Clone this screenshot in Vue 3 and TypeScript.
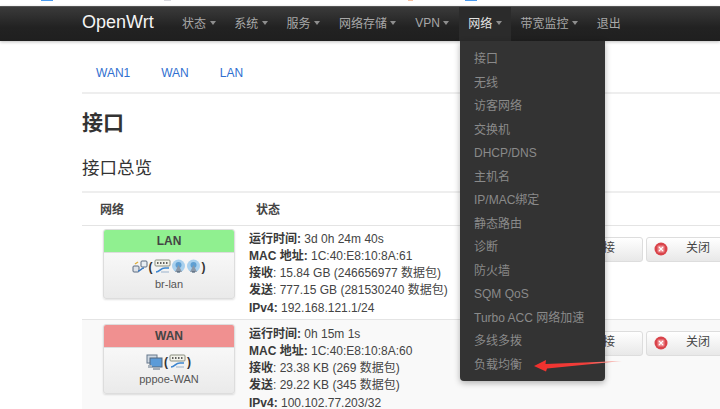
<script setup lang="ts">
const navItems = [
  { label: '状态', caret: true },
  { label: '系统', caret: true },
  { label: '服务', caret: true },
  { label: '网络存储', caret: true },
  { label: 'VPN', caret: true },
  { label: '网络', caret: true, active: true },
  { label: '带宽监控', caret: true },
  { label: '退出', caret: false },
]
const menu = ['接口', '无线', '访客网络', '交换机', 'DHCP/DNS', '主机名', 'IP/MAC绑定', '静态路由', '诊断', '防火墙', 'SQM QoS', 'Turbo ACC 网络加速', '多线多拨', '负载均衡']
const tabs = ['WAN1', 'WAN', 'LAN']
const rows = [
  {
    name: 'LAN', cls: 'lan', dev: 'br-lan', icons: ['eth', 'open', 'sw', 'wifi', 'wifi', 'close'],
    uptime: '3d 0h 24m 40s', mac: '1C:40:E8:10:8A:61', rx: '15.84 GB (246656977 数据包)', tx: '777.15 GB (281530240 数据包)', ip: '192.168.121.1/24',
  },
  {
    name: 'WAN', cls: 'wan', dev: 'pppoe-WAN', icons: ['pc', 'open', 'sw', 'close'],
    uptime: '0h 15m 1s', mac: '1C:40:E8:10:8A:60', rx: '23.38 KB (269 数据包)', tx: '29.22 KB (345 数据包)', ip: '100.102.77.203/32',
  },
]
</script>

<template>
  <div class="page">
    <div class="strip">
      <i class="bit b1"></i><i class="bit b2"></i><i class="bit b3"></i><i class="bit b4"></i>
    </div>
    <header class="navbar">
      <span class="brand">OpenWrt</span>
      <nav class="nav">
        <span v-for="n in navItems" :key="n.label" class="nav-item" :class="{ active: n.active }">
          {{ n.label }}<i v-if="n.caret" class="caret"></i>
        </span>
      </nav>
    </header>

    <ul class="dropdown">
      <li v-for="m in menu" :key="m">{{ m }}</li>
    </ul>

    <svg class="arrow" width="96" height="20" viewBox="0 0 96 20">
      <defs>
        <linearGradient id="tail" x1="0" x2="1" y1="0" y2="0">
          <stop offset="0" stop-color="#f02f2c" />
          <stop offset="0.6" stop-color="#f2403c" />
          <stop offset="1" stop-color="#f8b0a8" />
        </linearGradient>
      </defs>
      <path d="M1 10 L13 4 L12.5 8 L89 5 L14 12.5 L13 15.5 Z" fill="url(#tail)" />
    </svg>

    <main class="content">
      <div class="tabs">
        <a v-for="t in tabs" :key="t" class="tab">{{ t }}</a>
      </div>
      <h1>接口</h1>
      <h2>接口总览</h2>
      <table class="table">
        <thead>
          <tr><th class="c1">网络</th><th class="c2">状态</th></tr>
        </thead>
        <tbody>
          <tr v-for="r in rows" :key="r.name" :class="r.cls">
            <td class="c1">
              <div class="ifbox">
                <div class="ifhead">{{ r.name }}</div>
                <div class="ifbody">
                  <div class="icons">
                    <template v-for="(ic, i) in r.icons" :key="i">
                      <span v-if="ic === 'open'" class="paren">(</span>
                      <span v-else-if="ic === 'close'" class="paren">)</span>
                      <svg v-else-if="ic === 'eth'" width="16" height="14" viewBox="0 0 16 14">
                        <rect x="1" y="6" width="6" height="6" rx="1" fill="#dfe3e8" stroke="#5a6a80" />
                        <rect x="9" y="1" width="6" height="6" rx="1" fill="#e8edf2" stroke="#5a6a80" />
                        <path d="M6 11 C9 11 9 8 12 8" fill="none" stroke="#3a78c0" stroke-width="1.6" />
                        <path d="M3 4 L6 2" stroke="#e0b040" stroke-width="1.5" />
                      </svg>
                      <svg v-else-if="ic === 'sw'" width="17" height="15" viewBox="0 0 17 15">
                        <rect x="1" y="1" width="15" height="6" rx="1" fill="#f2f2ea" stroke="#8a8f80" />
                        <path d="M3 4h1.5M6 4h1.5M9 4h1.5M12 4h1.5" stroke="#333" stroke-width="1.5" />
                        <path d="M2 13 C6 13 6 9 11 9 L15 9" fill="none" stroke="#3d86d0" stroke-width="1.6" />
                        <path d="M7 13 H15" stroke="#b7c7d8" stroke-width="1.3" />
                      </svg>
                      <svg v-else-if="ic === 'wifi'" width="15" height="15" viewBox="0 0 15 15">
                        <circle cx="7.5" cy="7" r="6.5" fill="#a8d0ee" />
                        <circle cx="7.5" cy="6" r="3" fill="#5f9fd2" />
                        <path d="M7.5 6 L4 13 H11 Z" fill="#8a98a8" />
                        <path d="M6 13 H9" stroke="#456" stroke-width="1" />
                      </svg>
                      <svg v-else width="17" height="16" viewBox="0 0 17 16">
                        <rect x="1" y="1" width="10" height="8" fill="#cfd8e2" stroke="#66788c" />
                        <rect x="4" y="4" width="12" height="9" fill="#5b9bd8" stroke="#53677c" />
                        <path d="M2 11 H6 V14 H2 Z" fill="#a9b3bd" />
                        <path d="M7 15 H14" stroke="#8795a3" stroke-width="1.3" />
                      </svg>
                    </template>
                  </div>
                  <div class="dev">{{ r.dev }}</div>
                </div>
              </div>
            </td>
            <td class="status">
              <div><b>运行时间:</b> {{ r.uptime }}</div>
              <div><b>MAC 地址:</b> {{ r.mac }}</div>
              <div><b>接收</b>: {{ r.rx }}</div>
              <div><b>发送</b>: {{ r.tx }}</div>
              <div><b>IPv4:</b> {{ r.ip }}</div>
              <div class="actions">
                <span class="btn b-conn">连接</span>
                <span class="btn b-close">
                  <svg width="14" height="14" viewBox="0 0 14 14">
                    <circle cx="7" cy="7" r="6.5" fill="#d9434a" />
                    <rect x="3.5" y="3.5" width="7" height="7" rx="1" fill="#ee8a8e" />
                    <path d="M5 5 L9 9 M9 5 L5 9" stroke="#fff" stroke-width="1.2" />
                  </svg>
                  <span>关闭</span>
                </span>
              </div>
            </td>
          </tr>
        </tbody>
      </table>
    </main>
  </div>
</template>

<style>
html, body { margin: 0; background: #fff; overflow: hidden; }
</style>

<style scoped>
.page {
  position: relative;
  width: 720px;
  height: 409px;
  overflow: hidden;
  background: #fff;
  font-family: "Liberation Sans", "Noto Sans CJK SC", sans-serif;
  font-size: 12px;
  color: #333;
}
.strip { position: relative; height: 6px; }
.bit { position: absolute; top: 0; height: 1px; }
.b1 { left: 41px; width: 12px; background: #4a9bf0; }
.b2 { left: 164px; width: 7px; background: #d8d8de; }
.b3 { left: 408px; width: 5px; background: #f8c0a0; }
.b4 { left: 465px; width: 12px; background: #4a9bf0; }
.navbar {
  display: flex;
  align-items: stretch;
  height: 35px;
  padding-left: 82px;
  background: linear-gradient(#3a3a3a, #222 60%, #1f1f1f);
  border-top: 1px solid #555;
  box-sizing: border-box;
  box-shadow: 0 1px 3px rgba(0, 0, 0, .25);
}
.brand { font-size: 18px; color: #f4f4f4; line-height: 31px; width: 90.6px; }
.nav { display: flex; }
.nav-item {
  display: flex;
  align-items: center;
  padding: 0 9.4px 3px;
  color: #a8a8a8;
  font-size: 12px;
  white-space: nowrap;
}
.nav-item.active { background: #2b2b2b; color: #e4e4e4; }
.caret {
  display: inline-block;
  margin-left: 3.5px;
  border-top: 4px solid #8e8e8e;
  border-left: 3.5px solid transparent;
  border-right: 3.5px solid transparent;
}
.dropdown {
  position: absolute;
  left: 460px;
  top: 41px;
  width: 145px;
  height: 340px;
  box-sizing: border-box;
  margin: 0;
  padding: 7px 0 0 14px;
  list-style: none;
  background: #333;
  border-radius: 0 0 4px 4px;
  box-shadow: 0 2px 6px rgba(0, 0, 0, .3);
  color: #8a8a8a;
  font-size: 12px;
  line-height: 23.5px;
  z-index: 3;
}
.arrow { position: absolute; left: 533px; top: 356px; z-index: 4; }
.content { padding: 17px 0 0 82px; }
.tabs {
  display: flex;
  height: 36px;
  box-sizing: border-box;
  padding: 7px 0 0 14px;
  border-bottom: 2px solid #eee;
  width: 700px;
}
.tab { color: #2f6fd0; font-size: 12px; line-height: 16px; margin-right: 31px; }
h1 { margin: 14px 0 0; font-size: 21px; line-height: 30px; font-weight: 700; color: #333; }
h2 { margin: 17px 0 0; font-size: 17.5px; line-height: 26px; font-weight: 400; color: #333; }
.table {
  margin-top: 10px;
  width: 700px;
  border-collapse: collapse;
  border-top: 2px solid #eee;
  table-layout: fixed;
}
th {
  height: 33px;
  box-sizing: border-box;
  padding: 0 0 1px;
  text-align: left;
  font-size: 12px;
  font-weight: 700;
  color: #444;
  border-bottom: 1px solid #e4e4e4;
}
th.c2 { padding-left: 7px; }
th.c1, td.c1 { width: 167px; padding-left: 18px; box-sizing: border-box; }
td { padding: 0; vertical-align: top; border-bottom: 1px solid #e4e4e4; }
.wan td { background: #f9f9f9; }
.lan td { height: 94px; box-sizing: border-box; }
.ifbox {
  margin: 3px 0 0 3px;
  width: 132px;
  height: 70px;
  border: 1px solid #ddd;
  border-radius: 3px;
  box-sizing: border-box;
  overflow: hidden;
  background: linear-gradient(#fff, #eaeaea);
  box-shadow: 0 1px 2px rgba(0, 0, 0, .12);
}
.wan .ifbox { margin-top: 4px; }
.ifhead {
  height: 22px;
  line-height: 22px;
  text-align: center;
  font-weight: 700;
  color: #444;
  font-size: 12px;
  border-bottom: 1px solid #ddd;
}
.lan .ifhead { background: #90f090; }
.wan .ifhead { background: #f09090; }
.icons {
  display: flex;
  justify-content: center;
  align-items: center;
  height: 16px;
  margin-top: 6px;
}
.paren { font-size: 12px; margin: 0 1px; color: #333; font-weight: 700; }
.dev { text-align: center; font-size: 11px; line-height: 15px; margin-top: 2px; color: #555; }
.status { position: relative; padding: 5px 0 0 0; font-size: 12px; line-height: 17.3px; color: #444; }
.wan .status { padding-top: 6px; }
.status b { font-weight: 700; color: #3a3a3a; }
.actions { position: absolute; left: 0; top: 11px; width: 100%; height: 26px; }
.btn {
  position: absolute;
  top: 0;
  height: 25px;
  box-sizing: border-box;
  border: 1px solid #ddd;
  border-radius: 3px;
  background: linear-gradient(#fff, #e8e8e8);
  color: #444;
  display: flex;
  align-items: center;
  font-size: 12px;
}
.b-conn { left: 330px; width: 64px; justify-content: flex-end; padding-right: 27px; }
.b-close { left: 397px; width: 90px; padding-left: 7px; }
.b-close span { margin-left: 18px; }
</style>
